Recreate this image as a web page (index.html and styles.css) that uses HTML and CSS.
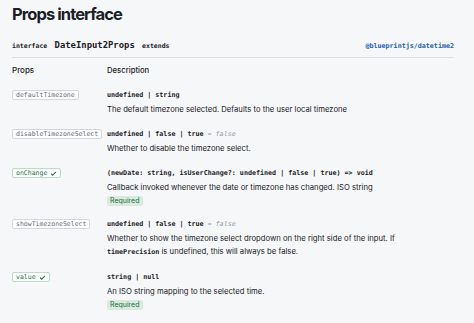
FILE: index.html
```html
<!DOCTYPE html>
<html lang="en-US">
	<head>
		<meta charset="utf-8">
		<title>Props interface</title>
		<link rel="stylesheet" href="styles.css">
	</head>
	<body>
		<main class="panel">
			<h2 class="title">Props interface</h2>
			<div class="signature">
				<code class="sig"><span class="kw">interface</span> <span class="name">DateInput2Props</span> <span class="kw">extends</span></code>
				<code class="package">@blueprintjs/datetime2</code>
			</div>

			<div class="props">
				<div class="props-head">
					<span class="col-name">Props</span>
					<span class="col-desc">Description</span>
				</div>

				<div class="prop">
					<div class="col-name"><code class="tag">defaultTimezone</code></div>
					<div class="col-desc">
						<div class="type"><code>undefined | string</code></div>
						<p>The default timezone selected. Defaults to the user local timezone</p>
					</div>
				</div>

				<div class="prop">
					<div class="col-name"><code class="tag">disableTimezoneSelect</code></div>
					<div class="col-desc">
						<div class="type"><code>undefined | false | true</code> <span class="default">= false</span></div>
						<p>Whether to disable the timezone select.</p>
					</div>
				</div>

				<div class="prop">
					<div class="col-name">
						<code class="tag required">onChange
							<svg class="check" viewBox="0 0 16 16"><path d="M2.5 8.5 L6 12 L13.5 4.5" /></svg>
						</code>
					</div>
					<div class="col-desc">
						<div class="type"><code>(newDate: string, isUserChange?: undefined | false | true) =&gt; void</code></div>
						<p>Callback invoked whenever the date or timezone has changed. ISO string</p>
						<span class="badge">Required</span>
					</div>
				</div>

				<div class="prop">
					<div class="col-name"><code class="tag">showTimezoneSelect</code></div>
					<div class="col-desc">
						<div class="type"><code>undefined | false | true</code> <span class="default">= false</span></div>
						<p>Whether to show the timezone select dropdown on the right side of the input. If
							<code>timePrecision</code> is undefined, this will always be false.</p>
					</div>
				</div>

				<div class="prop">
					<div class="col-name">
						<code class="tag required">value
							<svg class="check" viewBox="0 0 16 16"><path d="M2.5 8.5 L6 12 L13.5 4.5" /></svg>
						</code>
					</div>
					<div class="col-desc">
						<div class="type"><code>string | null</code></div>
						<p>An ISO string mapping to the selected time.</p>
						<span class="badge">Required</span>
					</div>
				</div>
			</div>
		</main>
	</body>
</html>
```

FILE: styles.css
```css
body {
	background-color: #fff;
	color: #1c2127;
	font-family: Inter, "Liberation Sans", sans-serif;
	margin: 0;
}
code {
	font-family: "DejaVu Sans Mono", "Liberation Mono", monospace;
	font-size: inherit;
}
.panel {
	background-color: #f6f7f9;
	padding: 3px 20px 11px 12px;
}
.title {
	font-size: 16.5px;
	font-weight: 700;
	letter-spacing: -0.055em;
	line-height: 22px;
	margin: 0;
}
.signature {
	align-items: center;
	border-bottom: 1px solid #dce0e5;
	display: flex;
	font-size: 8.9px;
	justify-content: space-between;
	line-height: 14px;
	margin-top: 13px;
	padding-bottom: 4px;
}
.sig .kw {
	font-size: 6.5px;
	font-weight: 700;
}
.sig .name {
	font-weight: 700;
	margin: 0 2px;
}
.package {
	color: #215db0;
	font-size: 6.7px;
	font-weight: 700;
}
.props-head,
.prop {
	display: flex;
}
.props-head {
	font-size: 8px;
	font-weight: 500;
	line-height: 12px;
	padding: 6px 0;
}
.prop {
	padding: 6px 0;
}
.col-name {
	flex: 0 0 95px;
	line-height: 12px;
}
.prop .col-name {
	font-size: 6.5px;
}
.col-desc {
	flex: 1;
	font-size: 7.7px;
	line-height: 13px;
	padding-right: 22px;
}
.tag {
	align-items: center;
	background-color: #fff;
	border: 1px solid #d3d8de;
	border-radius: 2px;
	color: #5f6b7c;
	display: inline-flex;
	line-height: 8px;
	padding: 0 3px;
	vertical-align: middle;
}
.tag.required {
	border-color: #bcdcc8;
	color: #1c6e42;
}
.check {
	fill: none;
	height: 7px;
	margin-left: 3px;
	stroke: #1c6e42;
	stroke-width: 2.4;
	width: 7px;
}
.type {
	font-size: 6.7px;
	line-height: 12px;
	margin-bottom: 2px;
}
.type code {
	font-weight: 700;
}
.default {
	color: #8f99a8;
	font-family: "DejaVu Sans Mono", monospace;
	font-style: italic;
	margin-left: 2px;
}
.col-desc p {
	margin: 0;
}
.col-desc p code {
	font-size: 6.7px;
	font-weight: 700;
}
.badge {
	background-color: #dbeae1;
	border-radius: 2px;
	color: #1c6e42;
	display: block;
	font-size: 7px;
	line-height: 10px;
	margin-top: 2px;
	padding: 0 3px;
	width: fit-content;
}
```
